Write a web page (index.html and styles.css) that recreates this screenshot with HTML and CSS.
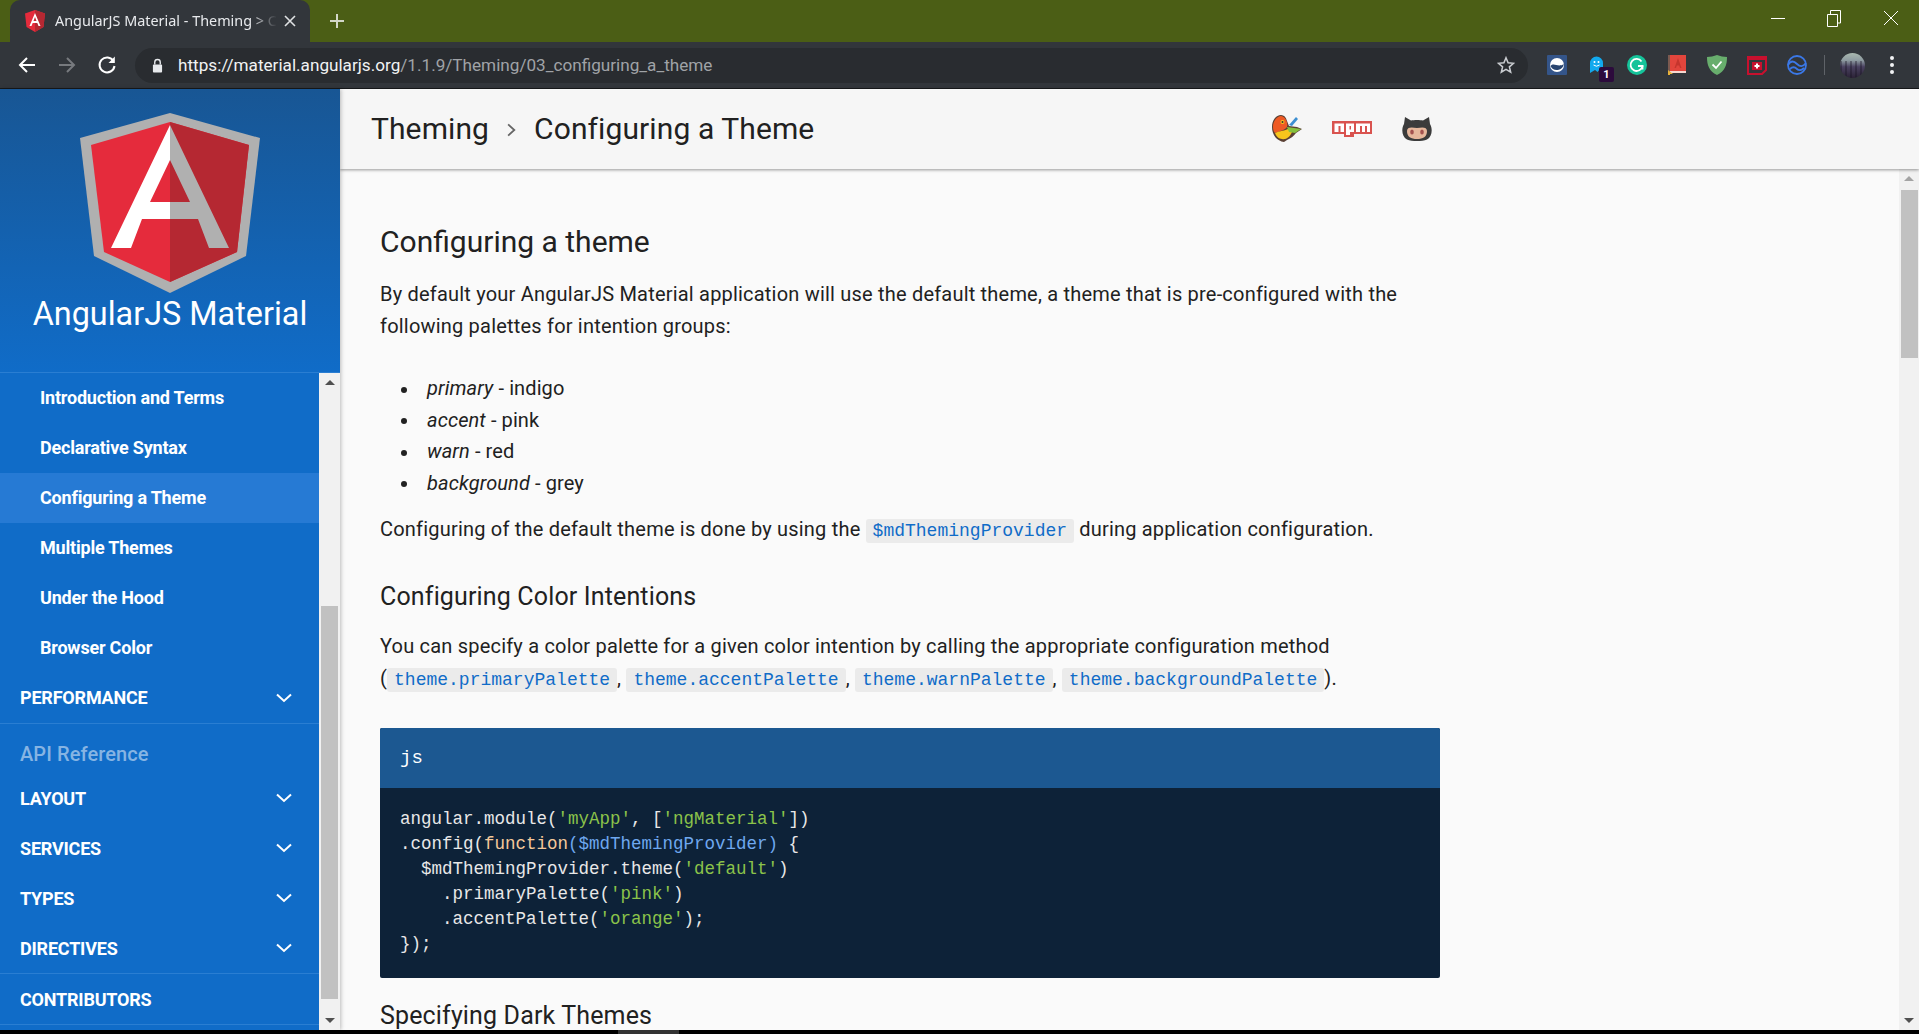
FILE: index.html
```html
<!DOCTYPE html>
<html lang="en">
<head>
    <meta charset="UTF-8">
    <meta name="viewport" content="width=device-width, initial-scale=1.0">
    <title>AngularJS Material - Theming &gt; Configuring a Theme</title>
    <link rel="stylesheet" href="styles.css">
</head>
<body>
    <div class="tabstrip">
        <div class="tab">
            <svg class="tab-icon" viewBox="0 0 20 22"><polygon points="10,0 20,3.500 18.500,17 10,22 1.500,17 0,3.500" fill="#e52b3c"/><polygon points="10,0 20,3.500 18.500,17 10,22" fill="#b52832"/><polygon points="10,3 4.500,16 6.500,16 7.700,13 12.300,13 13.500,16 15.500,16" fill="#fff"/><polygon points="10,7 8.500,11 11.500,11" fill="#c92a38"/></svg>
            <span class="tab-title">AngularJS Material - Theming &gt; Configuring a Theme</span>
            <svg class="tab-close" viewBox="0 0 12 12"><path d="M1 1 L11 11 M11 1 L1 11" stroke="#dfe1e3" stroke-width="1.600"/></svg>
        </div>
        <svg class="new-tab" viewBox="0 0 16 16"><path d="M8 1 V15 M1 8 H15" stroke="#d3d7c8" stroke-width="2"/></svg>
        <div class="window-controls">
            <div class="win-btn"><svg viewBox="0 0 14 14"><path d="M0 7.500 H14" stroke="#fff" stroke-width="1"/></svg></div>
            <div class="win-btn"><svg viewBox="0 0 14 18"><path d="M0.500 5.500 H10.500 V17.500 H0.500 Z M3.500 5 V1.500 H13.500 V14 H11" fill="none" stroke="#fff" stroke-width="1"/></svg></div>
            <div class="win-btn"><svg viewBox="0 0 14 14"><path d="M0 0 L14 14 M14 0 L0 14" stroke="#fff" stroke-width="1"/></svg></div>
        </div>
    </div>

    <div class="toolbar">
        <svg class="nav-btn" viewBox="0 0 20 20"><path d="M18 10 H3 M10 3 L3 10 L10 17" fill="none" stroke="#fff" stroke-width="2"/></svg>
        <svg class="nav-btn" viewBox="0 0 20 20"><path d="M2 10 H17 M10 3 L17 10 L10 17" fill="none" stroke="#777a7e" stroke-width="2"/></svg>
        <svg class="nav-btn" viewBox="0 0 20 20"><path d="M16.500 6 A7.500 7.500 0 1 0 17.500 11" fill="none" stroke="#fff" stroke-width="2"/><polygon points="17.800,1.500 17.800,8 11.500,8" fill="#fff"/></svg>
        <div class="urlbar">
            <svg class="lock" viewBox="0 0 12 16"><path d="M3 7 V4.500 A3 3 0 0 1 9 4.500 V7" fill="none" stroke="#e8eaed" stroke-width="1.500"/><rect x="1" y="7" width="10" height="8.500" rx="1" fill="#e8eaed"/></svg>
            <span class="url"><span class="url-host">https://material.angularjs.org</span>/1.1.9/Theming/03_configuring_a_theme</span>
            <svg class="star" viewBox="0 0 20 20"><polygon points="10,2 12.300,7.600 18.400,8.100 13.800,12.100 15.200,18 10,14.900 4.800,18 6.200,12.100 1.600,8.100 7.700,7.600" fill="none" stroke="#c9ccd0" stroke-width="1.700"/></svg>
        </div>
        <div class="extensions">
            <svg class="ext" viewBox="0 0 20 20"><rect width="20" height="20" rx="1" fill="#34558a"/><circle cx="10" cy="10" r="7" fill="#fff"/><path d="M3.500 11 C7 7 11 13 16.800 9 A7 7 0 0 1 3.500 11" fill="#28446f"/></svg>
            <div class="ext ghost">
                <svg viewBox="0 0 20 20"><path d="M3 18 V8 A6.500 6.500 0 0 1 16 8 V16 L13 14 L10.500 17 L8 15 Z" fill="#12a9ee"/><circle cx="7.500" cy="7" r="1" fill="#fff"/><circle cx="11.500" cy="7" r="1" fill="#fff"/><path d="M6.500 10 Q9.500 12.500 12.500 10" fill="none" stroke="#fff" stroke-width="1"/></svg>
                <span class="ext-badge">1</span>
            </div>
            <svg class="ext" viewBox="0 0 20 20"><circle cx="10" cy="10" r="10" fill="#15c39a"/><path d="M14.500 6.500 A6 6 0 1 0 15.500 11 H11" fill="none" stroke="#fff" stroke-width="1.800"/><path d="M15.500 11 V14.500" stroke="#fff" stroke-width="1.800"/></svg>
            <svg class="ext" viewBox="0 0 20 20"><rect x="1" y="0" width="4" height="19" fill="#7c5a50"/><rect x="3" y="0" width="16" height="18" fill="#e2453c"/><rect x="3" y="16" width="16" height="2" fill="#f5d8d0"/><polygon points="11,3 7.500,13 9,13 9.800,10.500 12.200,10.500 13,13 14.500,13" fill="#c5352d"/><polygon points="1,15 6,19 3,19 3,20 1,20" fill="#e8b23a"/></svg>
            <svg class="ext" viewBox="0 0 20 20"><path d="M10 0 C13 1 17 2 20 2 C20 10 18 16 10 20 C2 16 0 10 0 2 C3 2 7 1 10 0 Z" fill="#68ae6d"/><path d="M5.500 9.500 L9 13 L14.500 6.500" fill="none" stroke="#fff" stroke-width="1.800"/></svg>
            <svg class="ext" viewBox="0 0 20 20"><path d="M1 2 H19 V15 L15 19 H1 Z" fill="none" stroke="#c8102e" stroke-width="2"/><rect x="1" y="1" width="18" height="4" fill="#c8102e"/><rect x="5" y="7" width="10" height="8" fill="#c8102e"/><path d="M10 8.500 V13.500 M7.500 11 H12.500" stroke="#fff" stroke-width="2"/></svg>
            <svg class="ext" viewBox="0 0 20 20"><circle cx="10" cy="10" r="9" fill="none" stroke="#3b78e7" stroke-width="1.800"/><path d="M1 10 C4 5 7 6 10 9 C13 12 16 12 19 8 M3 14 C6 11 8 12 10 14 C12 16 15 15 17 13" fill="none" stroke="#3b78e7" stroke-width="1.800"/></svg>
        </div>
        <div class="toolbar-sep"></div>
        <div class="avatar"></div>
        <svg class="dots" viewBox="0 0 6 20"><circle cx="3" cy="3" r="2" fill="#f1f3f4"/><circle cx="3" cy="10" r="2" fill="#f1f3f4"/><circle cx="3" cy="17" r="2" fill="#f1f3f4"/></svg>
    </div>

    <div class="page">
        <aside class="sidebar">
            <div class="brand">
                <svg class="logo" viewBox="0 0 180 180">
                    <polygon points="90,0 180,25 166,143 90,180 14,143 0,25" fill="#b0b0b0"/>
                    <polygon points="90,9 169,32 157,139 90,169 24,139 11,32" fill="#e52b3c"/>
                    <polygon points="90,9 169,32 157,139 90,169" fill="#b52832"/>
                    <polygon points="90,12 90,47 70,89 90,89 90,106 62,106 51,135 31,135" fill="#fff"/>
                    <polygon points="90,12 90,47 110,89 90,89 90,106 118,106 129,135 149,135" fill="#b0b0b0"/>
                </svg>
                <div class="brand-name">AngularJS Material</div>
            </div>
            <div class="side-scroll">
                <ul class="side-menu">
                    <li class="sub-item">Introduction and Terms</li>
                    <li class="sub-item">Declarative Syntax</li>
                    <li class="sub-item active">Configuring a Theme</li>
                    <li class="sub-item">Multiple Themes</li>
                    <li class="sub-item">Under the Hood</li>
                    <li class="sub-item">Browser Color</li>
                    <li class="top-item ruled lifted">PERFORMANCE <svg class="chevron" viewBox="0 0 16 10"><path d="M1 1.500 L8 8 L15 1.500" fill="none" stroke="#fff" stroke-width="2"/></svg></li>
                    <li class="side-heading">API Reference</li>
                    <li class="top-item">LAYOUT <svg class="chevron" viewBox="0 0 16 10"><path d="M1 1.500 L8 8 L15 1.500" fill="none" stroke="#fff" stroke-width="2"/></svg></li>
                    <li class="top-item">SERVICES <svg class="chevron" viewBox="0 0 16 10"><path d="M1 1.500 L8 8 L15 1.500" fill="none" stroke="#fff" stroke-width="2"/></svg></li>
                    <li class="top-item">TYPES <svg class="chevron" viewBox="0 0 16 10"><path d="M1 1.500 L8 8 L15 1.500" fill="none" stroke="#fff" stroke-width="2"/></svg></li>
                    <li class="top-item ruled">DIRECTIVES <svg class="chevron" viewBox="0 0 16 10"><path d="M1 1.500 L8 8 L15 1.500" fill="none" stroke="#fff" stroke-width="2"/></svg></li>
                    <li class="top-item ruled">CONTRIBUTORS</li>
                </ul>
                <div class="vbar side-bar">
                    <div class="arrow-up"></div>
                    <div class="thumb"></div>
                    <div class="arrow-down"></div>
                </div>
            </div>
        </aside>

        <div class="main">
            <header class="crumbs">
                <span>Theming</span>
                <svg class="crumb-sep" viewBox="0 0 8 12"><path d="M1 1 L6.500 6 L1 11" fill="none" stroke="#666" stroke-width="1.600"/></svg>
                <span>Configuring a Theme</span>
                <div class="crumb-links">
                    <svg class="bower" viewBox="0 0 30 27">
                        <path d="M9 0 C4 0 0 5 0 12 C0 20 5 26 12 27 L15 25 C19 23 22 21 24 18 L30 14 L25 12 L17 11 L15 6 C14 2 12 0 9 0 Z" fill="#5a4034"/>
                        <path d="M9 1 C5 1 1 6 1 12 C1 15 2 17 3 18 C8 16 13 15 15 12 C16 8 14 2 9 1 Z" fill="#ee5a24"/>
                        <path d="M3 18 C7 16 12 16 16 14 L20 17 C18 22 14 25 10 24 C7 24 4 21 3 18 Z" fill="#f8c51c"/>
                        <path d="M15 12 L29 14 L23 18 L17 17 Z" fill="#86c23c"/>
                        <path d="M17 10 L24 2 L26 4 L20 11 Z" fill="#3d8fd1"/>
                        <circle cx="10.500" cy="7" r="2" fill="#f8c51c"/><circle cx="10.500" cy="7" r="1" fill="#333"/>
                    </svg>
                    <svg class="npm" viewBox="0 0 40 16">
                        <path d="M0 0 H40 V13 H22 V16 H12 V13 H0 Z" fill="#d9534f"/>
                        <path d="M2.500 2.500 H12 V11 H8.500 V5 H6.500 V11 H2.500 Z" fill="#fff"/>
                        <path d="M14 2.500 H22 V11 H18 V14 H14 Z M17.500 5 V8.500 H19 V5 Z" fill="#fff" fill-rule="evenodd"/>
                        <path d="M24 2.500 H38 V11 H35 V5 H33 V11 H30 V5 H28 V11 H24 Z" fill="#fff"/>
                    </svg>
                    <svg class="octocat" viewBox="0 0 30 24">
                        <path d="M3 0 L9 3.500 C12 2.800 18 2.800 21 3.500 L27 0 L28 7 C31 12 30 20 25 22.500 C20 24.500 10 24.500 5 22.500 C0 20 -1 12 2 7 Z" fill="#3b3b3b"/>
                        <path d="M5 14 C5 10 9 10 15 11 C21 10 25 10 25 14 C25 20 21 22 15 22 C9 22 5 20 5 14 Z" fill="#e6b79c"/>
                        <ellipse cx="10" cy="15" rx="1.800" ry="2.500" fill="#a4524f"/><ellipse cx="20" cy="15" rx="1.800" ry="2.500" fill="#a4524f"/>
                    </svg>
                </div>
            </header>
            <div class="doc">
                <article class="doc-body">
                    <h2>Configuring a theme</h2>
                    <p class="intro">By default your AngularJS Material application will use the default theme, a theme that is pre-configured with the following palettes for intention groups:</p>
                    <ul class="palettes">
                        <li><em>primary</em> - indigo</li>
                        <li><em>accent</em> - pink</li>
                        <li><em>warn</em> - red</li>
                        <li><em>background</em> - grey</li>
                    </ul>
                    <p class="after-list">Configuring of the default theme is done by using the <code>$mdThemingProvider</code> during application configuration.</p>
                    <h3>Configuring Color Intentions</h3>
                    <p class="after-h3">You can specify a color palette for a given color intention by calling the appropriate configuration method (<code>theme.primaryPalette</code>, <code>theme.accentPalette</code>, <code>theme.warnPalette</code>, <code>theme.backgroundPalette</code>).</p>
                    <div class="code-block">
                        <div class="code-lang">js</div>
<pre class="code-text">angular.module(<span class="str">'myApp'</span>, [<span class="str">'ngMaterial'</span>])
.config(<span class="kw">function</span><span class="param">($mdThemingProvider)</span> {
  $mdThemingProvider.theme(<span class="str">'default'</span>)
    .primaryPalette(<span class="str">'pink'</span>)
    .accentPalette(<span class="str">'orange'</span>);
});</pre>
                    </div>
                    <h3 class="dark-title">Specifying Dark Themes</h3>
                </article>
                <div class="vbar doc-bar">
                    <div class="arrow-up"></div>
                    <div class="thumb"></div>
                    <div class="arrow-down"></div>
                </div>
            </div>
        </div>
    </div>

    <div class="taskbar"><div class="task-piece"></div></div>
</body>
</html>
```

FILE: styles.css
```css
* {
    box-sizing: border-box;
}
html, body {
    height: 100%;
}
body {
    margin: 0;
    height: 1034px;
    overflow: hidden;
    display: flex;
    flex-direction: column;
    font-family: Roboto, "Liberation Sans", sans-serif;
    background: #fafafa;
    color: #212121;
}

/* browser window */
.tabstrip {
    height: 42px;
    flex: none;
    display: flex;
    align-items: flex-end;
    padding-left: 10px;
    background: #4b5e15;
}
.tab {
    width: 300px;
    height: 42px;
    display: flex;
    align-items: center;
    padding-left: 15px;
    background: #32363b;
    border-radius: 10px 10px 0 0;
    color: #e8eaed;
}
.tab-icon {
    width: 20px;
    height: 22px;
    flex: none;
}
.tab-title {
    width: 222px;
    margin: -2px 0 0 10px;
    font-family: "Noto Sans", sans-serif;
    font-size: 14.400px;
    white-space: nowrap;
    overflow: hidden;
    -webkit-mask-image: linear-gradient(to right, #000 88%, transparent);
    mask-image: linear-gradient(to right, #000 88%, transparent);
}
.tab-close {
    width: 12px;
    height: 12px;
    margin-left: 7px;
}
.new-tab {
    width: 16px;
    height: 16px;
    margin: 0 0 13px 19px;
}
.window-controls {
    margin-left: auto;
    display: flex;
    align-self: stretch;
}
.win-btn {
    width: 56.500px;
    height: 36px;
    display: flex;
    align-items: center;
    justify-content: center;
}
.win-btn svg {
    width: 14px;
    height: 18px;
}
.toolbar {
    height: 47px;
    flex: none;
    display: flex;
    align-items: center;
    padding-left: 17px;
    background: #32363b;
    border-bottom: 1px solid #17191b;
}
.nav-btn {
    width: 20px;
    height: 20px;
    margin-right: 20px;
    flex: none;
}
.urlbar {
    width: 1393px;
    height: 35px;
    margin-left: -2px;
    flex: none;
    display: flex;
    align-items: center;
    padding: 0 13px 0 17px;
    background: #292c30;
    border-radius: 18px;
}
.lock {
    width: 11px;
    height: 15px;
}
.url {
    margin: -1px 0 0 15px;
    font-size: 17.150px;
    color: #a0a3a7;
    white-space: nowrap;
}
.url-host {
    color: #f1f3f4;
}
.star {
    width: 18px;
    height: 18px;
    margin-left: auto;
}
.extensions {
    display: flex;
    gap: 20px;
    margin-left: 19px;
}
.ext {
    width: 20px;
    height: 20px;
    flex: none;
}
.ghost {
    position: relative;
}
.ghost svg {
    display: block;
    width: 20px;
    height: 20px;
}
.ext-badge {
    position: absolute;
    left: 12px;
    top: 12px;
    width: 15px;
    height: 15px;
    background: #2c0b3c;
    border-radius: 2px;
    color: #fff;
    font-size: 11px;
    font-weight: 700;
    line-height: 15px;
    text-align: center;
}
.toolbar-sep {
    width: 1px;
    height: 20px;
    margin-left: 17px;
    background: #5f6368;
}
.avatar {
    width: 25px;
    height: 25px;
    margin-left: 15px;
    border-radius: 50%;
    background:
        repeating-linear-gradient(90deg, rgba(20, 15, 30, 0.35) 0 2px, transparent 2px 5px) 0 8px / 100% 100% no-repeat,
        linear-gradient(#a9b8ae 0, #8d9aa0 30%, #4a4260 55%, #2b2236 100%);
}
.dots {
    width: 6px;
    height: 20px;
    margin-left: 24px;
}

/* page */
.page {
    flex: 1;
    min-height: 0;
    display: flex;
}
.sidebar {
    width: 340px;
    flex: none;
    display: flex;
    flex-direction: column;
    position: relative;
    z-index: 2;
    background: #106cc8;
    box-shadow: 1px 0 4px rgba(0, 0, 0, 0.25);
}
.brand {
    height: 284px;
    flex: none;
    display: flex;
    flex-direction: column;
    align-items: center;
    padding-top: 24px;
    background: linear-gradient(#185694, #106cc8);
    border-bottom: 1px solid #2a7ed2;
}
.logo {
    width: 180px;
    height: 180px;
    flex: none;
}
.brand-name {
    margin-top: 1px;
    font-size: 32.400px;
    line-height: 40px;
    color: #fff;
    white-space: nowrap;
}
.side-scroll {
    flex: 1;
    min-height: 0;
    display: flex;
}
.side-menu {
    flex: 1;
    margin: 0;
    padding: 0;
    list-style: none;
    color: #fff;
    font-size: 18px;
    font-weight: 700;
    letter-spacing: -0.2px;
}
.sub-item {
    height: 50px;
    padding-left: 40px;
    line-height: 50px;
}
.sub-item.active {
    background: #267ad4;
}
.top-item {
    height: 50px;
    display: flex;
    align-items: center;
    justify-content: space-between;
    padding: 0 27px 0 20px;
}
.top-item.ruled {
    height: 51px;
    border-bottom: 1px solid #2a7ed2;
}
.top-item.lifted {
    padding-bottom: 1px;
}
.chevron {
    width: 16px;
    height: 10px;
}
.side-heading {
    height: 49px;
    padding: 18px 0 0 20px;
    line-height: 24px;
    color: #86b4e3;
    font-size: 20px;
    font-weight: 500;
    letter-spacing: 0.1px;
}
.vbar {
    flex: none;
    display: flex;
    flex-direction: column;
    align-items: center;
    background: #f1f1f1;
}
.side-bar {
    width: 21px;
}
.doc-bar {
    width: 20px;
}
.arrow-up,
.arrow-down {
    width: 0;
    height: 0;
    border-left: 5px solid transparent;
    border-right: 5px solid transparent;
}
.arrow-up {
    margin-top: 7px;
    border-bottom: 5px solid #505050;
}
.arrow-down {
    margin-top: auto;
    margin-bottom: 7px;
    border-top: 5px solid #505050;
}
.thumb {
    width: 17px;
    background: #c1c1c1;
}
.side-bar .thumb {
    height: 393px;
    margin-top: 221px;
}
.doc-bar .arrow-up {
    border-bottom-color: #a3a3a3;
    margin-top: 7px;
}
.doc-bar .thumb {
    height: 168px;
    margin-top: 9px;
}
.main {
    flex: 1;
    min-width: 0;
    display: flex;
    flex-direction: column;
}
.crumbs {
    height: 80px;
    flex: none;
    display: flex;
    align-items: center;
    padding: 0 0 1px 31px;
    position: relative;
    z-index: 1;
    background: #f6f6f6;
    box-shadow: 0 1px 3px rgba(0, 0, 0, 0.4);
    font-size: 30px;
    letter-spacing: 0.1px;
    color: #212121;
}
.crumb-sep {
    width: 9px;
    height: 14px;
    margin: 2px 18px 0 18px;
}
.crumb-links {
    display: flex;
    align-items: center;
    margin-left: 458px;
}
.bower {
    width: 30px;
    height: 27px;
}
.npm {
    width: 40px;
    height: 16px;
    margin-left: 30px;
}
.octocat {
    width: 30px;
    height: 24px;
    margin-left: 30px;
}
.doc {
    flex: 1;
    min-height: 0;
    display: flex;
}
.doc-body {
    flex: 1;
    min-width: 0;
    overflow: hidden;
    padding: 53px 0 0 40px;
    font-size: 20px;
    line-height: 32px;
    letter-spacing: 0.2px;
}
.doc-body > * {
    max-width: 1060px;
}
h2 {
    margin: 0;
    font-size: 30px;
    font-weight: 400;
    line-height: 40px;
    letter-spacing: 0;
}
h3 {
    margin: 34px 0 0;
    font-size: 25px;
    font-weight: 400;
    line-height: 36px;
    letter-spacing: 0.15px;
}
p {
    margin: 0;
}
.intro {
    margin-top: 16px;
}
.palettes {
    margin: 31px 0 0;
    padding-left: 47px;
    list-style: none;
    line-height: 31.500px;
    letter-spacing: 0.1px;
}
.palettes li::before {
    content: "";
    display: inline-block;
    width: 6px;
    height: 6px;
    margin: 0 20px 0 -26px;
    border-radius: 50%;
    background: #212121;
    vertical-align: middle;
}
.after-list {
    margin-top: 14px;
}
.after-h3 {
    margin-top: 15px;
}
code {
    padding: 2px 7px;
    background: #ebebeb;
    border-radius: 3px;
    color: #106cc8;
    font-family: "Liberation Mono", monospace;
    font-size: 18px;
    line-height: 1;
    letter-spacing: 0;
}
.code-block {
    margin-top: 34px;
    border-radius: 2px;
    overflow: hidden;
    background: #0d2238;
    font-family: "Liberation Mono", monospace;
    font-size: 17.500px;
    letter-spacing: 0;
}
.code-lang {
    height: 60px;
    padding-left: 20px;
    line-height: 60px;
    font-size: 19px;
    background: #1c5891;
    color: #fff;
}
.code-text {
    height: 190px;
    margin: 0;
    padding: 19px 20px 0;
    font: inherit;
    line-height: 25px;
    color: #e8e8e8;
}
.str {
    color: #8bc34a;
}
.kw {
    color: #f5c99a;
}
.param {
    color: #6fa8ef;
}
.dark-title {
    margin-top: 20px;
}
.taskbar {
    height: 4px;
    flex: none;
    padding-left: 618px;
    background: #000;
}
.task-piece {
    width: 61px;
    height: 4px;
    background: #333;
}
```
